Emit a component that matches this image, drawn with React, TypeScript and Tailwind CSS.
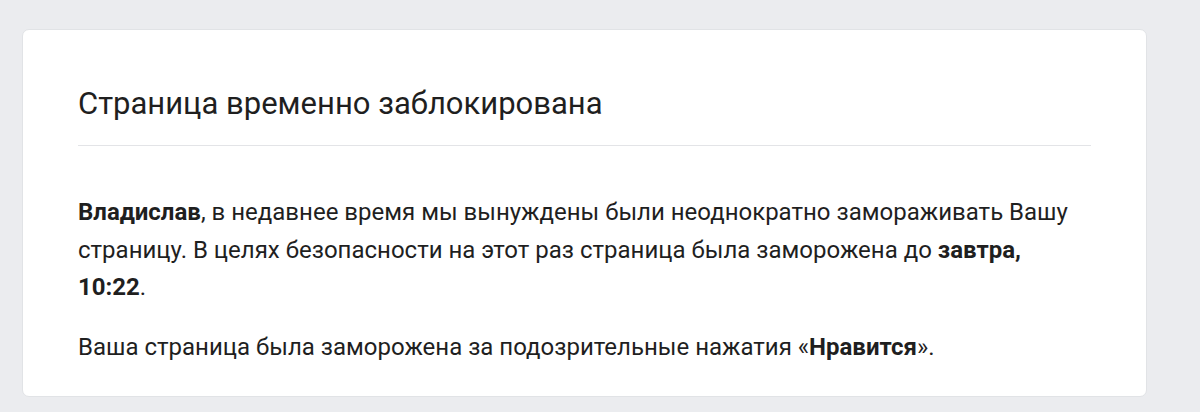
export default function App() {
  return (
    <div className="w-[1200px] h-[412px] bg-[#ebecef] pt-[29px] pl-[22px]" style={{ fontFamily: 'Roboto, "Noto Sans", sans-serif' }}>
      <div className="w-[1125px] h-[368px] bg-white rounded-[7px] border border-[#e1e3e6] px-[55px]">
        <div className="h-[116px] flex items-center pt-[31px] border-b border-[#e3e4e7]">
          <h1 className="text-[31px] text-[#1f1f1f] leading-none font-normal">Страница временно заблокирована</h1>
        </div>
        <div className="pt-[48px] text-[24px] leading-[37.5px] text-[#1f1f1f]">
          <p>
            <b className="font-bold">Владислав</b>, в недавнее время мы вынуждены были неоднократно замораживать Вашу страницу. В целях безопасности на этот раз страница была заморожена до <b className="font-bold">завтра, 10:22</b>.
          </p>
          <p className="mt-[22px]">
            Ваша страница была заморожена за подозрительные нажатия «<b className="font-bold">Нравится</b>».
          </p>
        </div>
      </div>
    </div>
  );
}
